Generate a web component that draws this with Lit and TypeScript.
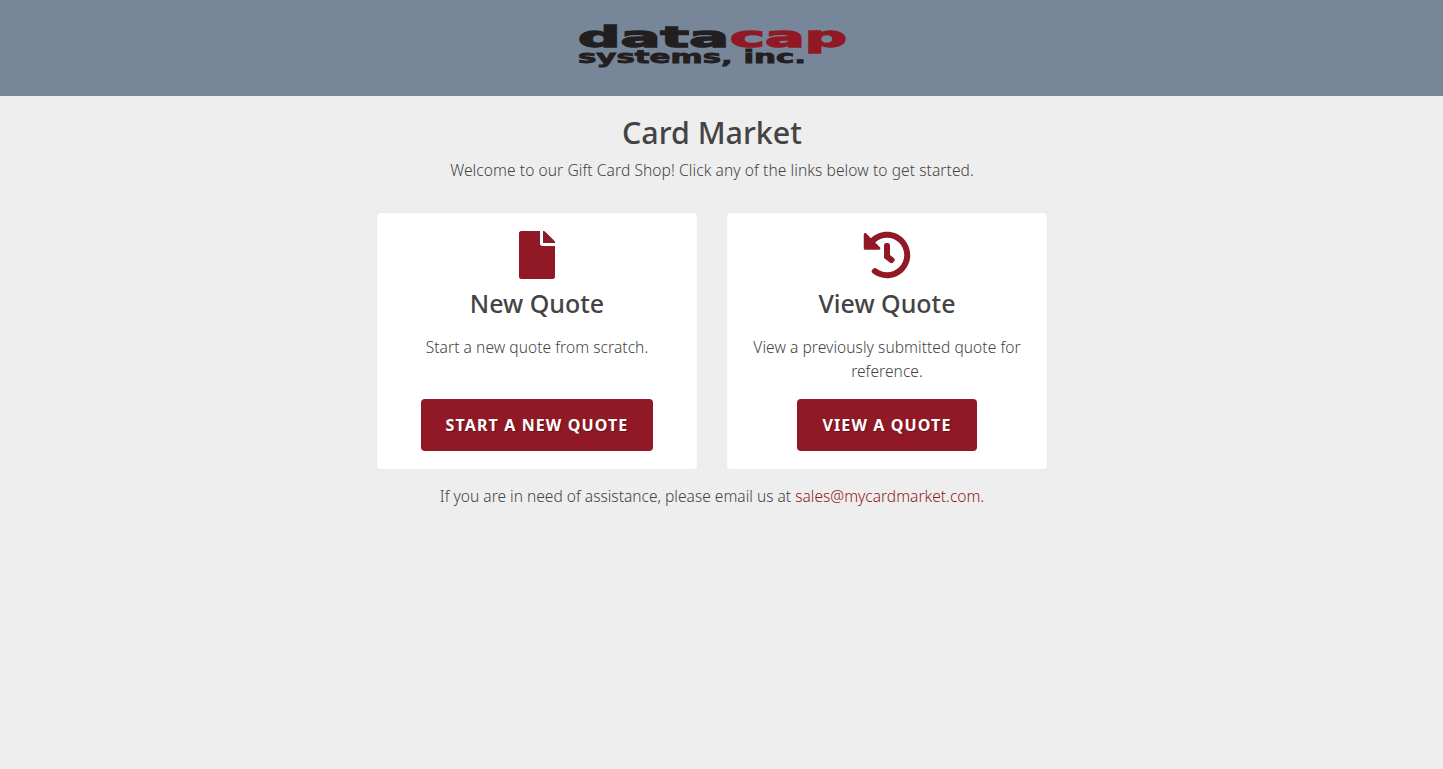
import { LitElement, html, css } from "lit";
import { customElement } from "lit/decorators.js";

const FILE = "M224 136V0H24C10.7 0 0 10.7 0 24v464c0 13.3 10.7 24 24 24h336c13.3 0 24-10.7 24-24V160H248c-13.2 0-24-10.8-24-24zm160-14.1v6.1H256V0h6.1c6.4 0 12.5 2.5 17 7l97.9 98c4.5 4.5 7 10.6 7 16.9z";
const HISTORY = "M504 255.531c.253 136.64-111.18 248.372-247.82 248.468-59.015.042-113.223-20.53-155.822-54.911-11.077-8.94-11.905-25.541-1.839-35.607l11.267-11.267c8.609-8.609 22.353-9.551 31.891-1.984C173.062 425.135 212.781 440 256 440c101.705 0 184-82.311 184-184 0-101.705-82.311-184-184-184-48.814 0-93.149 18.969-126.068 49.932l50.754 50.754c10.08 10.08 2.941 27.314-11.313 27.314H24c-8.837 0-16-7.163-16-16V38.627c0-14.254 17.234-21.393 27.314-11.314l49.372 49.372C129.209 34.136 189.552 8 256 8c136.81 0 247.747 110.78 248 247.531zm-180.912 78.784l9.823-12.63c8.138-10.463 6.253-25.542-4.21-33.679L288 256.349V152c0-13.255-10.745-24-24-24h-16c-13.255 0-24 10.745-24 24v135.651l65.409 50.874c10.463 8.137 25.541 6.253 33.679-4.21z";

@customElement("app-root")
export class AppRoot extends LitElement {
  static styles = css`
    :host {
      display: block;
      min-height: 769px;
      background: #eeeeee;
      color: #444444;
      font-family: "Noto Sans", "Open Sans", sans-serif;
      font-size: 15.55px;
      font-weight: 300;
      line-height: 24px;
    }
    .header {
      height: 96px;
      padding-right: 19px;
      background: #778698;
      display: flex;
      align-items: center;
      justify-content: center;
    }
    .logo { display: block; width: 272px; height: 46px; overflow: visible; }
    .logo text { font-family: "DejaVu Sans", sans-serif; font-weight: 700; }
    .main {
      display: flex;
      flex-direction: column;
      align-items: center;
      padding: 17px 19px 0 0;
    }
    h1 {
      margin: 0;
      font-size: 30.4px;
      line-height: 40px;
      font-weight: 500;
    }
    .lead { margin: 5px 0 0; letter-spacing: 0.08px; }
    .cards {
      display: flex;
      gap: 30px;
      margin-top: 31px;
      align-items: stretch;
    }
    .card {
      box-sizing: border-box;
      width: 320px;
      height: 256px;
      padding: 18px 20px;
      background: #fff;
      border-radius: 4px;
      box-shadow: 0 0 2px rgba(0, 0, 0, 0.06);
      display: flex;
      flex-direction: column;
      align-items: center;
      text-align: center;
    }
    .icon { display: block; height: 48px; fill: #911926; }
    h3 {
      margin: 7px 0 0;
      font-size: 25px;
      line-height: 34px;
      font-weight: 500;
    }
    .card p { margin: 15px 0 0; max-width: 276px; letter-spacing: 0.05px; }
    .btn {
      margin-top: auto;
      box-sizing: border-box;
      height: 52px;
      padding: 0 25px;
      display: flex;
      align-items: center;
      background: #911926;
      color: #fff;
      border-radius: 4px;
      font-size: 16px;
      font-weight: 700;
      letter-spacing: 1.12px;
      text-transform: uppercase;
      text-decoration: none;
      text-shadow: 1px 1px 1px rgba(0, 0, 0, 0.3);
      white-space: nowrap;
    }
    .help { margin: 15px 0 0; }
    .help a { color: #911926; text-decoration: none; }
  `;

  private logo() {
    return html`<svg class="logo" viewBox="0 0 272 46" role="img" aria-label="datacap systems, inc.">
      <text x="2" y="22" font-size="29" textLength="151" lengthAdjust="spacingAndGlyphs" fill="#231f20" stroke="#231f20" stroke-width="1.4">data</text>
      <text x="154" y="22" font-size="29" textLength="117" lengthAdjust="spacingAndGlyphs" fill="#911926" stroke="#911926" stroke-width="1.4">cap</text>
      <text x="2" y="38" font-size="17" textLength="228" lengthAdjust="spacingAndGlyphs" fill="#231f20" stroke="#231f20" stroke-width="0.8">systems, inc.</text>
    </svg>`;
  }

  private card(viewBox: string, width: number, path: string, title: string, text: string, cta: string) {
    return html`<div class="card">
      <svg class="icon" style="width:${width}px" viewBox=${viewBox}><path d=${path}></path></svg>
      <h3>${title}</h3>
      <p>${text}</p>
      <a class="btn" href="#">${cta}</a>
    </div>`;
  }

  render() {
    return html`
      <div class="header">${this.logo()}</div>
      <div class="main">
        <h1>Card Market</h1>
        <p class="lead">Welcome to our Gift Card Shop! Click any of the links below to get started.</p>
        <div class="cards">
          ${this.card("0 0 384 512", 36, FILE, "New Quote", "Start a new quote from scratch.", "Start a new quote")}
          ${this.card("0 0 512 512", 48, HISTORY, "View Quote", "View a previously submitted quote for reference.", "View a quote")}
        </div>
        <p class="help">If you are in need of assistance, please email us at <a href="#">sales@mycardmarket.com</a>.</p>
      </div>
    `;
  }
}
